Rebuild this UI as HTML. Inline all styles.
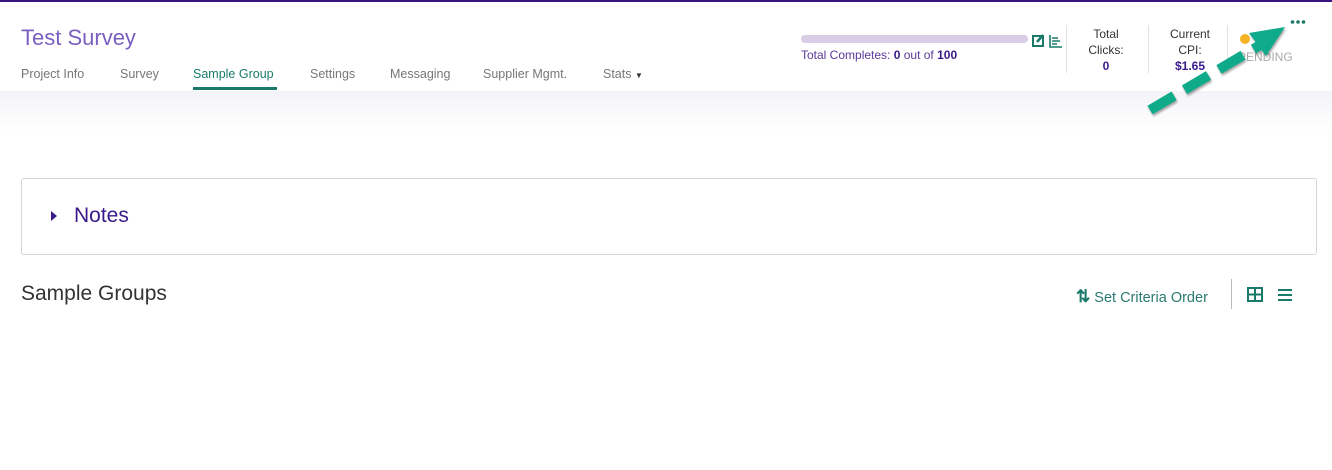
<!DOCTYPE html>
<html><head><style>
*{margin:0;padding:0;box-sizing:border-box}
body{width:1332px;height:470px;background:#fff;font-family:"Liberation Sans",sans-serif;position:relative;overflow:hidden}
.top{position:absolute;left:0;top:0;width:1332px;height:2px;background:#3a1580}
.hdr{position:absolute;left:0;top:2px;width:1332px;height:89px;background:#fff}
.shadow{position:absolute;left:0;top:91px;width:1332px;height:40px;background:linear-gradient(#f4f3f7,#fff)}
.t{position:absolute;white-space:nowrap}
.nav{font-size:12.5px;color:#777;top:67px}
.vl{position:absolute;width:1px;background:#e2e2e2;top:25px;height:48px}
.num{color:#3a1a8a;font-weight:bold}
</style></head><body>
<div class="top"></div><div class="hdr"></div><div class="shadow"></div>
<div class="t" style="left:21px;top:25px;font-size:22px;color:#7a5fc0">Test Survey</div>
<div class="t nav" style="left:21px">Project Info</div>
<div class="t nav" style="left:120px">Survey</div>
<div class="t nav" style="left:193px;color:#1a7a6a">Sample Group</div>
<div style="position:absolute;left:193px;top:87px;width:84px;height:3px;background:#1a7a6a"></div>
<div class="t nav" style="left:310px">Settings</div>
<div class="t nav" style="left:390px">Messaging</div>
<div class="t nav" style="left:483px">Supplier Mgmt.</div>
<div class="t nav" style="left:603px">Stats <span style="font-size:8px;color:#333">▼</span></div>
<div style="position:absolute;left:801px;top:35px;width:227px;height:8px;border-radius:4px;background:#d9cde6"></div>
<div class="t" style="left:801px;top:48px;font-size:12px;color:#5a3a9a">Total Completes: <span class="num">0</span> out of <span class="num">100</span></div>
<svg style="position:absolute;left:1032px;top:34px" width="34" height="14" viewBox="0 0 34 14"><rect x="1" y="2" width="10" height="10" fill="none" stroke="#1a7a6a" stroke-width="2"/><path d="M5 8 L11 1" stroke="#1a7a6a" stroke-width="2.5"/><path d="M18 1V13H30M20 4h6M20 7h8M20 10h5" stroke="#1a7a6a" stroke-width="1.6" fill="none"/></svg>
<div class="vl" style="left:1066px"></div>
<div class="t" style="left:1076px;top:26px;width:60px;text-align:center;font-size:12px;color:#333;line-height:16px">Total<br>Clicks:<br><span class="num">0</span></div>
<div class="vl" style="left:1148px"></div>
<div class="t" style="left:1160px;top:26px;width:60px;text-align:center;font-size:12px;color:#333;line-height:16px">Current<br>CPI:<br><span class="num">$1.65</span></div>
<div class="vl" style="left:1227px"></div>
<div style="position:absolute;left:1240px;top:34px;width:10px;height:10px;border-radius:50%;background:#f5b324"></div>
<div class="t" style="left:1238px;top:50px;font-size:12px;color:#aaa">PENDING</div>
<svg style="position:absolute;left:1290px;top:19px" width="16" height="6"><circle cx="2.5" cy="3" r="1.8" fill="#1a7a6a"/><circle cx="8" cy="3" r="1.8" fill="#1a7a6a"/><circle cx="13.5" cy="3" r="1.8" fill="#1a7a6a"/></svg>
<svg style="position:absolute;left:0;top:0" width="1332" height="130"><g filter="drop-shadow(1px 2px 1px rgba(0,0,0,.35))"><path d="M1150 110 L1262 44" stroke="#0faa8a" stroke-width="10" stroke-dasharray="28 12" stroke-linecap="butt" fill="none"/><path d="M1285 27 L1249 33 L1266 56 Z" fill="#0faa8a"/></g></svg>
<div style="position:absolute;left:21px;top:178px;width:1296px;height:77px;border:1px solid #d6d6d6;border-radius:3px"></div>
<div style="position:absolute;left:51px;top:211px;width:0;height:0;border-left:6px solid #3a1a8a;border-top:5px solid transparent;border-bottom:5px solid transparent"></div>
<div class="t" style="left:74px;top:204px;font-size:21px;color:#3a1a8a">Notes</div>
<div class="t" style="left:21px;top:282px;font-size:21px;color:#333;font-weight:300">Sample Groups</div>
<div class="t" style="left:1076px;top:287px;font-size:14.5px;color:#2a7a70"><b style="font-size:17px;color:#1a7a6a">⇅</b> Set Criteria Order</div>
<div style="position:absolute;left:1231px;top:279px;width:1px;height:30px;background:#bbb"></div>
<svg style="position:absolute;left:1247px;top:287px" width="48" height="16"><rect x="1" y="1" width="14" height="13" fill="none" stroke="#1a7a6a" stroke-width="2"/><path d="M8 1v13M1 7.5h14" stroke="#1a7a6a" stroke-width="2"/><path d="M31 3h14M31 8h14M31 13h14" stroke="#1a7a6a" stroke-width="2"/></svg>
</body></html>
